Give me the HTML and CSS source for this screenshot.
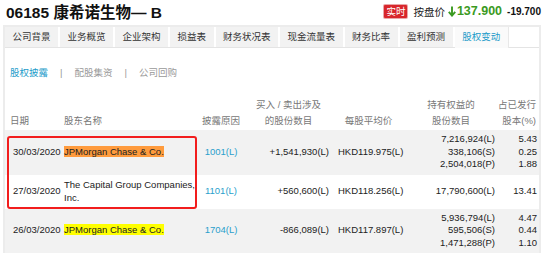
FILE: index.html
```html
<!DOCTYPE html>
<html lang="zh">
<head>
<meta charset="utf-8">
<title>06185 康希诺生物— B</title>
<link rel="stylesheet" href="styles.css">
</head>
<body>
<header class="topbar">
  <h1 class="title">06185 康希诺生物— B</h1>
  <div class="quote">
    <span class="badge">实时</span>
    <span class="quote-label">按盘价</span>
    <svg class="arrow" width="8" height="11" viewBox="0 0 8 11"><path d="M4 0.5V9M0.8 5.8L4 9.6L7.2 5.8" fill="none" stroke="#3a9a22" stroke-width="1.9"/></svg>
    <span class="price">137.900</span>
    <span class="change">-19.700</span>
  </div>
</header>
<section class="panel">
  <nav class="tabs">
    <span class="tab">公司背景</span>
    <span class="tab">业务概览</span>
    <span class="tab">企业架构</span>
    <span class="tab">损益表</span>
    <span class="tab">财务状况表</span>
    <span class="tab">现金流量表</span>
    <span class="tab">财务比率</span>
    <span class="tab">盈利预测</span>
    <span class="tab active">股权变动</span>
  </nav>
  <div class="subnav">
    <span class="sub active">股权披露</span>
    <span class="sep">|</span>
    <span class="sub">配股集资</span>
    <span class="sep">|</span>
    <span class="sub">公司回购</span>
  </div>
  <div class="table-wrap">
    <table class="grid">
      <colgroup>
        <col class="c-date"><col class="c-name"><col class="c-reason"><col class="c-buy"><col class="c-avg"><col class="c-hold"><col class="c-pct">
      </colgroup>
      <thead>
        <tr>
          <th class="h-date">日期</th>
          <th class="h-name">股东名称</th>
          <th class="h-center">披露原因</th>
          <th class="h-center">买入 / 卖出涉及<br>的股份数目</th>
          <th class="h-center">每股平均价</th>
          <th class="h-center">持有权益的<br>股份数目</th>
          <th class="h-right">占已发行<br>股本(%)</th>
        </tr>
      </thead>
      <tbody>
        <tr class="shade">
          <td class="date">30/03/2020</td>
          <td class="name"><span class="hl-orange">JPMorgan Chase &amp; Co.</span></td>
          <td class="reason">1001(L)</td>
          <td class="num">+1,541,930(L)</td>
          <td class="avg">HKD119.975(L)</td>
          <td class="num hold">7,216,924(L)<br>338,106(S)<br>2,504,018(P)</td>
          <td class="num pct">5.43<br>0.25<br>1.88</td>
        </tr>
        <tr>
          <td class="date">27/03/2020</td>
          <td class="name two">The Capital Group Companies, Inc.</td>
          <td class="reason">1101(L)</td>
          <td class="num">+560,600(L)</td>
          <td class="avg">HKD118.256(L)</td>
          <td class="num hold">17,790,600(L)</td>
          <td class="num pct">13.41</td>
        </tr>
        <tr class="shade">
          <td class="date">26/03/2020</td>
          <td class="name"><span class="hl-yellow">JPMorgan Chase &amp; Co.</span></td>
          <td class="reason">1704(L)</td>
          <td class="num">-866,089(L)</td>
          <td class="avg">HKD117.897(L)</td>
          <td class="num hold">5,936,794(L)<br>595,506(S)<br>1,471,288(P)</td>
          <td class="num pct">4.47<br>0.44<br>1.10</td>
        </tr>
      </tbody>
    </table>
    <div class="mark"></div>
  </div>
</section>
</body>
</html>
```
FILE: styles.css
```css
html, body {
  margin: 0;
  padding: 0;
  background: #fff;
  overflow: hidden;
}
body {
  width: 550px;
  height: 253px;
  font-family: "Liberation Sans", Arial, "Noto Sans CJK SC", sans-serif;
  color: #222;
}
.topbar {
  height: 25px;
  box-sizing: border-box;
  padding: 0 9px 3px 6px;
  display: flex;
  align-items: center;
  justify-content: space-between;
}
.title {
  margin: 0;
  font-size: 15.5px;
  font-weight: bold;
  color: #111;
  letter-spacing: 0;
}
.quote {
  display: flex;
  align-items: center;
}
.badge {
  background: #d8262c;
  color: #fff;
  font-size: 9.5px;
  line-height: 13px;
  height: 13px;
  padding: 0 2px;
  border-radius: 1px;
  box-shadow: 0 0 0 1px #e9a7a9;
  margin-right: 6px;
}
.quote-label {
  font-size: 10.5px;
  color: #222;
  margin-right: 3px;
}
.arrow {
  margin-right: 1px;
}
.price {
  color: #3a9a22;
  font-size: 12.5px;
  font-weight: bold;
  margin-right: 5px;
}
.change {
  font-size: 10px;
  font-weight: bold;
  color: #111;
}
.panel {
  margin-left: 3px;
  width: 534px;
  height: 226px;
  overflow: hidden;
  border: 2px solid #ececec;
  border-bottom: none;
}
.tabs {
  display: flex;
  gap: 2px;
  height: 20px;
  border-bottom: 1px solid #e4e4e4;
  background: #fff;
}
.tab {
  padding: 0 7.5px;
  font-size: 9.5px;
  line-height: 20px;
  color: #333;
  background: #f2f2f2;
  white-space: nowrap;
}
.tab.active {
  background: #fafafa;
  color: #1c9bc9;
  height: 21px;
  box-shadow: 1px 0 0 #e8e8e8;
}
.subnav {
  display: flex;
  gap: 12px;
  padding: 18px 0 0 5px;
  height: 13px;
  font-size: 9.5px;
  line-height: 13px;
  color: #999;
}
.sub.active {
  color: #1c9bc9;
}
.sep {
  color: #999;
}
.table-wrap {
  position: relative;
  margin-top: 18px;
}
.grid {
  border-collapse: collapse;
  table-layout: fixed;
  width: 534px;
  font-size: 9.5px;
}
.c-date { width: 57px; }
.c-name { width: 135px; }
.c-reason { width: 48px; }
.c-buy { width: 87px; }
.c-avg { width: 73px; }
.c-hold { width: 92px; }
.c-pct { width: 42px; }
th {
  font-weight: normal;
  color: #777;
  line-height: 16px;
  padding: 0 0 1px;
  vertical-align: bottom;
  white-space: nowrap;
}
.h-date { text-align: left; padding-left: 5px; }
.h-name { text-align: left; padding-left: 2px; }
.h-center { text-align: center; }
.h-right { text-align: right; padding-right: 3px; }
td {
  padding: 3px 0 4px;
  line-height: 12.5px;
  vertical-align: middle;
  white-space: nowrap;
  color: #222;
}
tr.shade td {
  background: #f2f2f2;
}
.date { padding-left: 8px; }
.name { padding-left: 2px; }
.name.two {
  white-space: normal;
  line-height: 13.5px;
}
.reason {
  text-align: center;
  color: #2a9fcc;
}
.num {
  text-align: right;
  padding-right: 3px;
}
.hold { padding-right: 2px; }
.pct { padding-right: 2px; }
.avg { padding-left: 6px; }
.hl-orange { background: #ff9b3d; }
.hl-yellow { background: #ffff00; }
.mark {
  position: absolute;
  left: 2px;
  top: 39px;
  width: 186px;
  height: 69px;
  border: 2px solid #f21d1d;
  border-radius: 3px;
}
```
